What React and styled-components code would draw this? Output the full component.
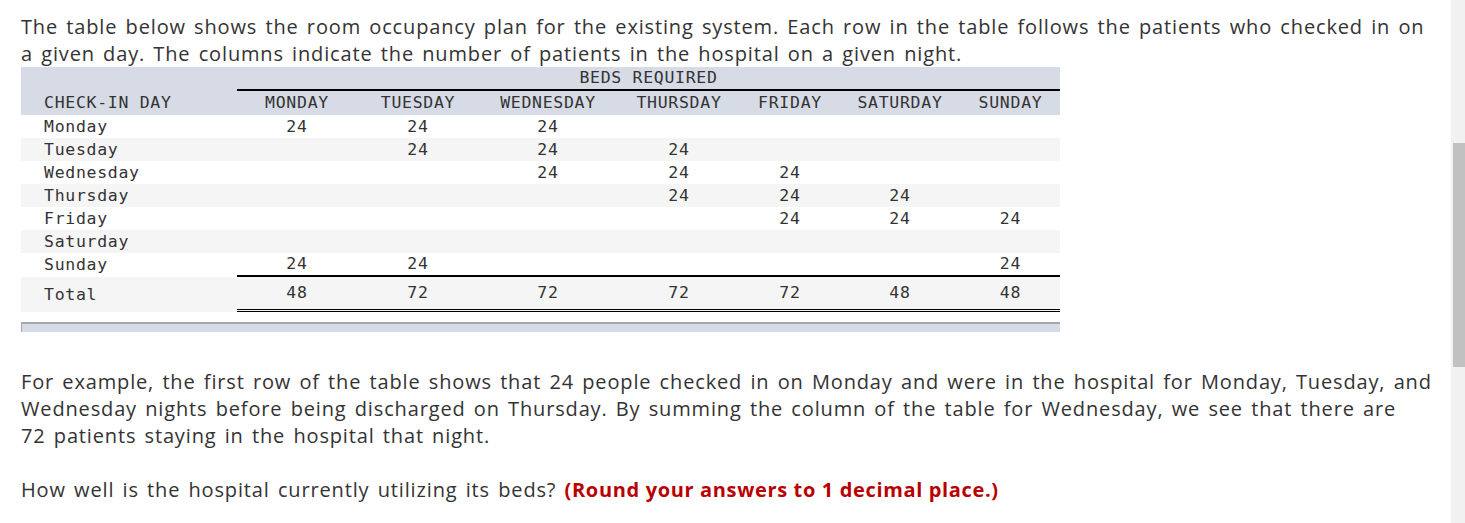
import React from 'react';
import styled, { createGlobalStyle } from 'styled-components';

const GlobalStyle = createGlobalStyle`
  html, body {
    margin: 0;
    padding: 0;
    overflow: hidden;
    background: #fff;
  }
`;

const DAYS = ['MONDAY', 'TUESDAY', 'WEDNESDAY', 'THURSDAY', 'FRIDAY', 'SATURDAY', 'SUNDAY'];
const COLS = [216, 120, 122, 138, 124, 98, 122, 99];

const rows = [
  { day: 'Monday', beds: [24, 24, 24, '', '', '', ''] },
  { day: 'Tuesday', beds: ['', 24, 24, 24, '', '', ''] },
  { day: 'Wednesday', beds: ['', '', 24, 24, 24, '', ''] },
  { day: 'Thursday', beds: ['', '', '', 24, 24, 24, ''] },
  { day: 'Friday', beds: ['', '', '', '', 24, 24, 24] },
  { day: 'Saturday', beds: ['', '', '', '', '', '', ''] },
  { day: 'Sunday', beds: [24, 24, '', '', '', '', 24] }
];
const totals = [48, 72, 72, 72, 72, 48, 48];

function App() {
  return (
    <Page>
      <GlobalStyle />
      <Main>
        <Para>
          The table below shows the room occupancy plan for the existing system. Each row in the table follows the patients who checked in on
          <br />
          a given day. The columns indicate the number of patients in the hospital on a given night.
        </Para>
        <Table>
          <colgroup>
            {COLS.map((w, i) => (
              <col key={i} style={{ width: w }} />
            ))}
          </colgroup>
          <thead>
            <HeadRow>
              <HeadCell />
              <GroupCell colSpan={7}>BEDS REQUIRED</GroupCell>
            </HeadRow>
            <HeadRow>
              <HeadCell left>CHECK-IN DAY</HeadCell>
              {DAYS.map((d) => (
                <HeadCell key={d}>{d}</HeadCell>
              ))}
            </HeadRow>
          </thead>
          <tbody>
            {rows.map((r, i) => (
              <BodyRow key={r.day} shade={i % 2 === 1}>
                <DayCell last={i === rows.length - 1}>{r.day}</DayCell>
                {r.beds.map((b, j) => (
                  <NumCell key={j} last={i === rows.length - 1}>
                    {b}
                  </NumCell>
                ))}
              </BodyRow>
            ))}
            <BodyRow shade>
              <TotalLabel>Total</TotalLabel>
              {totals.map((t, j) => (
                <TotalCell key={j}>{t}</TotalCell>
              ))}
            </BodyRow>
          </tbody>
        </Table>
        <TableFoot />
        <Para spaced>
          For example, the first row of the table shows that 24 people checked in on Monday and were in the hospital for Monday, Tuesday, and
          <br />
          Wednesday nights before being discharged on Thursday. By summing the column of the table for Wednesday, we see that there are
          <br />
          72 patients staying in the hospital that night.
        </Para>
        <Para gap>
          How well is the hospital currently utilizing its beds? <Hint>(Round your answers to 1 decimal place.)</Hint>
        </Para>
      </Main>
      <Scrollbar>
        <Thumb />
      </Scrollbar>
    </Page>
  );
}

const Page = styled.div`
  display: flex;
  height: 523px;
  overflow: hidden;
`;
const Main = styled.div`
  flex: 1;
  padding: 13px 0 0 21px;
  min-width: 0;
`;
const Para = styled.p`
  margin: ${({ spaced, gap }) => (spaced ? '36px 0 0' : gap ? '27px 0 0' : '0')};
  font-family: 'Open Sans', sans-serif;
  font-size: 20px;
  letter-spacing: 0.85px;
  word-spacing: 2.2px;
  line-height: 27px;
  color: #333;
  white-space: nowrap;
`;
const Hint = styled.span`
  color: #b80000;
  font-weight: 700;
  letter-spacing: 0.65px;
  word-spacing: 0;
`;
const Table = styled.table`
  width: 1039px;
  table-layout: fixed;
  border-collapse: separate;
  border-spacing: 0;
  font-family: 'DejaVu Sans Mono', monospace;
  font-size: 16.5px;
  letter-spacing: 0.7px;
  color: #333;
`;
const HeadRow = styled.tr`
  background: #d6dbe5;
`;
const HeadCell = styled.th`
  font-weight: 400;
  padding: 0 ${({ left }) => (left ? '0 0 23px' : '0')};
  text-align: ${({ left }) => (left ? 'left' : 'center')};
  line-height: 24px;
  white-space: nowrap;
`;
const GroupCell = styled.th`
  font-weight: 400;
  padding: 0;
  text-align: center;
  line-height: 22px;
  border-bottom: 2px solid #000;
`;
const BodyRow = styled.tr`
  background: ${({ shade }) => (shade ? '#f5f5f5' : '#fff')};
`;
const DayCell = styled.td`
  padding: 0 0 0 23px;
  line-height: ${({ last }) => (last ? '22px' : '23px')};
  white-space: nowrap;
`;
const NumCell = styled.td`
  padding: 0;
  text-align: center;
  line-height: ${({ last }) => (last ? '22px' : '23px')};
  border-bottom: ${({ last }) => (last ? '2px solid #000' : 'none')};
`;
const TotalLabel = styled.td`
  padding: 0 0 0 23px;
  line-height: 32px;
`;
const TotalCell = styled.td`
  padding: 0;
  text-align: center;
  line-height: 32px;
  border-bottom: 3px double #000;
`;
const TableFoot = styled.div`
  width: 1039px;
  box-sizing: border-box;
  height: 10px;
  margin-top: 10px;
  background: #d6dbe5;
  border-top: 2px solid #a3a7ae;
  border-left: 1px solid #a3a7ae;
`;
const Scrollbar = styled.div`
  width: 14px;
  flex: none;
  background: #f1f1f1;
  padding: 143px 0 0 2px;
  box-sizing: border-box;
`;
const Thumb = styled.div`
  height: 224px;
  background: #c1c1c1;
`;

export default App;
